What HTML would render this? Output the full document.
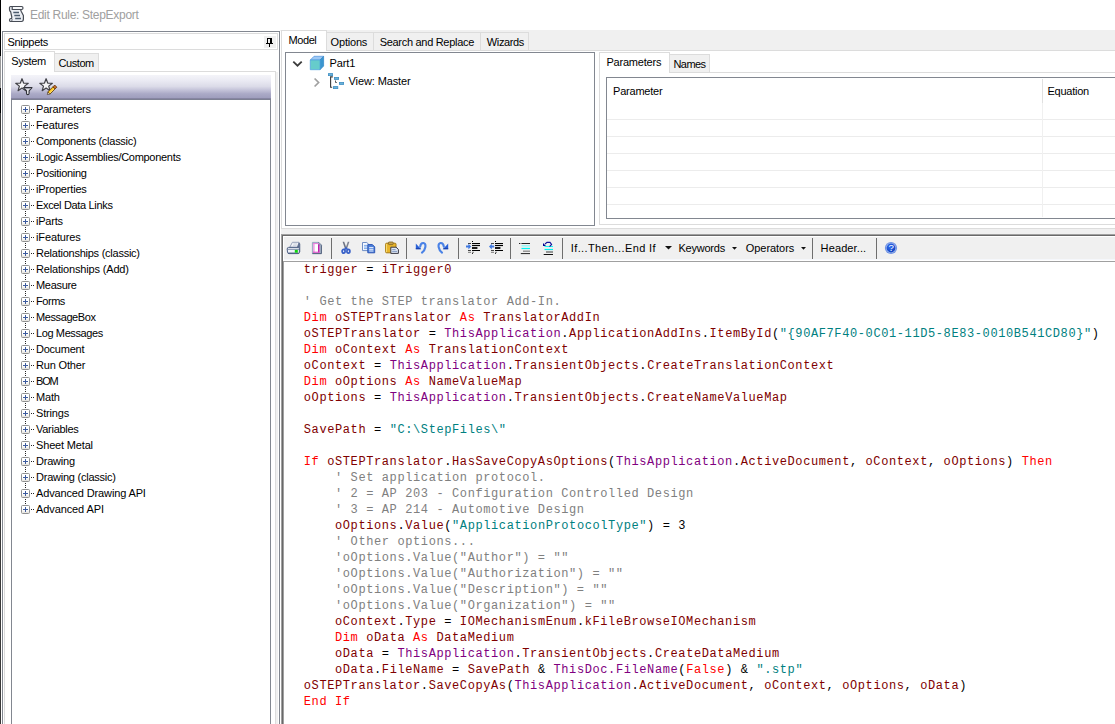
<!DOCTYPE html>
<html><head><meta charset="utf-8"><title>Edit Rule: StepExport</title>
<style>
html,body{margin:0;padding:0;background:#fff}
body{width:1115px;height:724px;overflow:hidden;position:relative;font-family:"Liberation Sans",sans-serif;font-size:11px;color:#000}
body>div,body>svg,body>pre{position:absolute;display:block}
.t{white-space:pre;line-height:16px;font-size:11px;color:#000}
.pm{width:9px;height:9px;box-sizing:border-box;border:1px solid #919191;border-radius:1.5px;background:linear-gradient(#fff 55%,#e4e2dc)}
.pm i{position:absolute;left:1px;top:3px;width:5px;height:1px;background:#3c5a9e}
.pm b{position:absolute;left:3px;top:1px;width:1px;height:5px;background:#3c5a9e}
.code{margin:0;font-family:"Liberation Mono",monospace;font-size:12px;letter-spacing:.6px;line-height:16px;color:#800000;white-space:pre}
.code .k{color:#ff0000}.code .c{color:#808080}.code .p{color:#800080}.code .s{color:#008080}.code .o{color:#000}
</style></head>
<body>
<div style="left:280px;top:30px;width:835px;height:206px;background:#f0f0f0"></div>
<div style="left:0px;top:0px;width:1px;height:724px;background:#3a3a3a"></div>
<div style="left:0px;top:0px;width:1px;height:56px;background:#000"></div>
<div style="left:0px;top:56px;width:1px;height:32px;background:#9a9a9a"></div>
<div style="left:0px;top:88px;width:1px;height:25px;background:#000"></div>
<svg style="left:8px;top:5px" width="17" height="18" viewBox="8 5 17 18">
<path d="M10.5 6.5 H21.6 Q23 6.6 23 8 Q23 9.4 21.6 9.5 H20.5 L21.3 11.5 L23.4 15.5 V19 Q23.4 21.4 21.5 21.5 H10.5 Q9.4 21.4 9.5 20 Q9.6 18.6 11 18.5 H11.6 L11.8 17 L10.6 11.6 Q9.5 11 9.5 9.4 V7.5 Q9.6 6.6 10.5 6.5 Z" fill="#eceff4" stroke="#474c55" stroke-width="1.2" stroke-linejoin="round"/>
<path d="M12.8 7.4 H21.8 V8.6 H12.8 Z" fill="#fff"/>
<path d="M12.2 6.6 V9.5 H20.6" fill="none" stroke="#474c55" stroke-width="1.2"/>
<path d="M11.6 18.5 Q12.6 19.4 11.6 21.4" fill="none" stroke="#4a4f58" stroke-width=".9"/>
<path d="M13.3 12.5H19M14.3 15.5H20M15.2 18.5H21" stroke="#4a5a6c" stroke-width="1.3"/>
</svg>
<div class="t" style="left:30px;top:7px;font-size:12px;line-height:16px;color:#a0a0a0;letter-spacing:-0.297px;">Edit Rule: StepExport</div>
<div style="left:2px;top:31px;width:278px;height:700px;border:1px solid #828790;background:#fff;box-sizing:border-box"></div>
<div style="left:4px;top:33px;width:274px;height:17px;border:1px solid #dcdcdc;box-sizing:border-box;background:#fff"></div>
<div class="t" style="left:7.4px;top:35px;line-height:14px;letter-spacing:-0.277px;">Snippets</div>
<div style="left:264px;top:36px;width:12px;height:12px;background:#f0f0f0"></div>
<svg style="left:266px;top:38px" width="7" height="9" viewBox="0 0 7 9" shape-rendering="crispEdges">
<rect x="1" y="0" width="5" height="1"/><rect x="1" y="0" width="1" height="5"/><rect x="4" y="0" width="2" height="5"/><rect x="0" y="5" width="7" height="1"/><rect x="3" y="6" width="1" height="3"/></svg>
<div style="left:4px;top:71px;width:272px;height:700px;border:1px solid #dcdcdc;box-sizing:border-box;background:#fff"></div>
<div style="left:276px;top:72px;width:2px;height:700px;background:#f0f0f0"></div>
<div style="left:54px;top:53px;width:45px;height:19px;border:1px solid #dcdcdc;box-sizing:border-box;background:#f0f0f0"></div>
<div style="left:4px;top:51px;width:51px;height:21px;border:1px solid #dcdcdc;border-bottom:none;box-sizing:border-box;background:#fff"></div>
<div class="t" style="left:11.3px;top:54px;line-height:14px;letter-spacing:-0.348px;">System</div>
<div class="t" style="left:58.4px;top:56px;line-height:14px;letter-spacing:-0.401px;">Custom</div>
<div style="left:11px;top:75px;width:260px;height:23px;background:linear-gradient(#f4f4f9 0%,#eaeaf3 25%,#dbdbe8 50%,#c6c5da 64%,#aaa9c6 82%,#9f9ebd 100%)"></div>
<div style="left:11px;top:98px;width:260px;height:1px;background:#8685a2"></div>
<svg style="left:12px;top:75px" width="50" height="24" viewBox="12 75 50 24">
<path d="M22.00 78.70 L23.62 83.08 L28.28 83.26 L24.62 86.15 L25.88 90.64 L22.00 88.05 L18.12 90.64 L19.38 86.15 L15.72 83.26 L20.38 83.08 Z" fill="#f4f4f6" stroke="#404046" stroke-width="1.2" stroke-linejoin="round"/>
<path d="M23.6 87.6 H32 L29.1 90.8 V93.2 Q29 94.6 27.8 94.6 Q26.6 94.6 26.5 93.2 V90.8 Z" fill="#e6e7ec" stroke="#2f3038" stroke-width="1.1" stroke-linejoin="round"/>
<path d="M24.6 88.6 H31" stroke="#9a9ca6" stroke-width=".9"/>
<path d="M46.10 78.70 L47.72 83.08 L52.38 83.26 L48.72 86.15 L49.98 90.64 L46.10 88.05 L42.22 90.64 L43.48 86.15 L39.82 83.26 L44.48 83.08 Z" fill="#f4f4f6" stroke="#404046" stroke-width="1.2" stroke-linejoin="round"/>
<path d="M47.3 94.6 L47.8 91.98 L49.92 94.1 Z" fill="#fff" stroke="#4a3a2a" stroke-width=".7" stroke-linejoin="round"/>
<path d="M47.8 91.98 L52.96 86.82 L55.08 88.94 L49.92 94.1 Z" fill="#ffc414" stroke="#55350a" stroke-width=".8" stroke-linejoin="round"/>
<path d="M49.3 93.4 L54.4 88.3" stroke="#fff1b0" stroke-width=".7"/>
<path d="M52.96 86.82 L54.72 85.06 L56.84 87.18 L55.08 88.94 Z" fill="#c9692a" stroke="#55350a" stroke-width=".8" stroke-linejoin="round"/>
</svg>
<div style="left:11px;top:99px;width:260px;height:700px;border:1px solid #828790;box-sizing:border-box;background:#fff"></div>
<div style="left:11px;top:99px;width:260px;height:1px;background:#7d8092"></div>
<div class="pm" style="left:21px;top:105px"><i></i><b></b></div>
<div style="left:31px;top:109px;width:1px;height:1px;background:#222"></div>
<div style="left:33px;top:109px;width:1px;height:1px;background:#222"></div>
<div style="left:25px;top:115px;width:1px;height:1px;background:#222"></div>
<div style="left:25px;top:117px;width:1px;height:1px;background:#222"></div>
<div style="left:25px;top:119px;width:1px;height:1px;background:#222"></div>
<div class="t" style="left:36.0px;top:101px;letter-spacing:-0.206px;">Parameters</div>
<div class="pm" style="left:21px;top:121px"><i></i><b></b></div>
<div style="left:31px;top:125px;width:1px;height:1px;background:#222"></div>
<div style="left:33px;top:125px;width:1px;height:1px;background:#222"></div>
<div style="left:25px;top:131px;width:1px;height:1px;background:#222"></div>
<div style="left:25px;top:133px;width:1px;height:1px;background:#222"></div>
<div style="left:25px;top:135px;width:1px;height:1px;background:#222"></div>
<div class="t" style="left:36.0px;top:117px;letter-spacing:-0.103px;">Features</div>
<div class="pm" style="left:21px;top:137px"><i></i><b></b></div>
<div style="left:31px;top:141px;width:1px;height:1px;background:#222"></div>
<div style="left:33px;top:141px;width:1px;height:1px;background:#222"></div>
<div style="left:25px;top:147px;width:1px;height:1px;background:#222"></div>
<div style="left:25px;top:149px;width:1px;height:1px;background:#222"></div>
<div style="left:25px;top:151px;width:1px;height:1px;background:#222"></div>
<div class="t" style="left:36.0px;top:133px;letter-spacing:-0.268px;">Components (classic)</div>
<div class="pm" style="left:21px;top:153px"><i></i><b></b></div>
<div style="left:31px;top:157px;width:1px;height:1px;background:#222"></div>
<div style="left:33px;top:157px;width:1px;height:1px;background:#222"></div>
<div style="left:25px;top:163px;width:1px;height:1px;background:#222"></div>
<div style="left:25px;top:165px;width:1px;height:1px;background:#222"></div>
<div style="left:25px;top:167px;width:1px;height:1px;background:#222"></div>
<div class="t" style="left:36.0px;top:149px;letter-spacing:-0.295px;">iLogic Assemblies/Components</div>
<div class="pm" style="left:21px;top:169px"><i></i><b></b></div>
<div style="left:31px;top:173px;width:1px;height:1px;background:#222"></div>
<div style="left:33px;top:173px;width:1px;height:1px;background:#222"></div>
<div style="left:25px;top:179px;width:1px;height:1px;background:#222"></div>
<div style="left:25px;top:181px;width:1px;height:1px;background:#222"></div>
<div style="left:25px;top:183px;width:1px;height:1px;background:#222"></div>
<div class="t" style="left:36.0px;top:165px;letter-spacing:-0.284px;">Positioning</div>
<div class="pm" style="left:21px;top:185px"><i></i><b></b></div>
<div style="left:31px;top:189px;width:1px;height:1px;background:#222"></div>
<div style="left:33px;top:189px;width:1px;height:1px;background:#222"></div>
<div style="left:25px;top:195px;width:1px;height:1px;background:#222"></div>
<div style="left:25px;top:197px;width:1px;height:1px;background:#222"></div>
<div style="left:25px;top:199px;width:1px;height:1px;background:#222"></div>
<div class="t" style="left:36.0px;top:181px;letter-spacing:-0.171px;">iProperties</div>
<div class="pm" style="left:21px;top:201px"><i></i><b></b></div>
<div style="left:31px;top:205px;width:1px;height:1px;background:#222"></div>
<div style="left:33px;top:205px;width:1px;height:1px;background:#222"></div>
<div style="left:25px;top:211px;width:1px;height:1px;background:#222"></div>
<div style="left:25px;top:213px;width:1px;height:1px;background:#222"></div>
<div style="left:25px;top:215px;width:1px;height:1px;background:#222"></div>
<div class="t" style="left:36.0px;top:197px;letter-spacing:-0.334px;">Excel Data Links</div>
<div class="pm" style="left:21px;top:217px"><i></i><b></b></div>
<div style="left:31px;top:221px;width:1px;height:1px;background:#222"></div>
<div style="left:33px;top:221px;width:1px;height:1px;background:#222"></div>
<div style="left:25px;top:227px;width:1px;height:1px;background:#222"></div>
<div style="left:25px;top:229px;width:1px;height:1px;background:#222"></div>
<div style="left:25px;top:231px;width:1px;height:1px;background:#222"></div>
<div class="t" style="left:36.0px;top:213px;letter-spacing:-0.204px;">iParts</div>
<div class="pm" style="left:21px;top:233px"><i></i><b></b></div>
<div style="left:31px;top:237px;width:1px;height:1px;background:#222"></div>
<div style="left:33px;top:237px;width:1px;height:1px;background:#222"></div>
<div style="left:25px;top:243px;width:1px;height:1px;background:#222"></div>
<div style="left:25px;top:245px;width:1px;height:1px;background:#222"></div>
<div style="left:25px;top:247px;width:1px;height:1px;background:#222"></div>
<div class="t" style="left:36.0px;top:229px;letter-spacing:-0.129px;">iFeatures</div>
<div class="pm" style="left:21px;top:249px"><i></i><b></b></div>
<div style="left:31px;top:253px;width:1px;height:1px;background:#222"></div>
<div style="left:33px;top:253px;width:1px;height:1px;background:#222"></div>
<div style="left:25px;top:259px;width:1px;height:1px;background:#222"></div>
<div style="left:25px;top:261px;width:1px;height:1px;background:#222"></div>
<div style="left:25px;top:263px;width:1px;height:1px;background:#222"></div>
<div class="t" style="left:36.0px;top:245px;letter-spacing:-0.245px;">Relationships (classic)</div>
<div class="pm" style="left:21px;top:265px"><i></i><b></b></div>
<div style="left:31px;top:269px;width:1px;height:1px;background:#222"></div>
<div style="left:33px;top:269px;width:1px;height:1px;background:#222"></div>
<div style="left:25px;top:275px;width:1px;height:1px;background:#222"></div>
<div style="left:25px;top:277px;width:1px;height:1px;background:#222"></div>
<div style="left:25px;top:279px;width:1px;height:1px;background:#222"></div>
<div class="t" style="left:36.0px;top:261px;letter-spacing:-0.168px;">Relationships (Add)</div>
<div class="pm" style="left:21px;top:281px"><i></i><b></b></div>
<div style="left:31px;top:285px;width:1px;height:1px;background:#222"></div>
<div style="left:33px;top:285px;width:1px;height:1px;background:#222"></div>
<div style="left:25px;top:291px;width:1px;height:1px;background:#222"></div>
<div style="left:25px;top:293px;width:1px;height:1px;background:#222"></div>
<div style="left:25px;top:295px;width:1px;height:1px;background:#222"></div>
<div class="t" style="left:36.0px;top:277px;letter-spacing:-0.314px;">Measure</div>
<div class="pm" style="left:21px;top:297px"><i></i><b></b></div>
<div style="left:31px;top:301px;width:1px;height:1px;background:#222"></div>
<div style="left:33px;top:301px;width:1px;height:1px;background:#222"></div>
<div style="left:25px;top:307px;width:1px;height:1px;background:#222"></div>
<div style="left:25px;top:309px;width:1px;height:1px;background:#222"></div>
<div style="left:25px;top:311px;width:1px;height:1px;background:#222"></div>
<div class="t" style="left:36.0px;top:293px;letter-spacing:-0.454px;">Forms</div>
<div class="pm" style="left:21px;top:313px"><i></i><b></b></div>
<div style="left:31px;top:317px;width:1px;height:1px;background:#222"></div>
<div style="left:33px;top:317px;width:1px;height:1px;background:#222"></div>
<div style="left:25px;top:323px;width:1px;height:1px;background:#222"></div>
<div style="left:25px;top:325px;width:1px;height:1px;background:#222"></div>
<div style="left:25px;top:327px;width:1px;height:1px;background:#222"></div>
<div class="t" style="left:36.0px;top:309px;letter-spacing:-0.399px;">MessageBox</div>
<div class="pm" style="left:21px;top:329px"><i></i><b></b></div>
<div style="left:31px;top:333px;width:1px;height:1px;background:#222"></div>
<div style="left:33px;top:333px;width:1px;height:1px;background:#222"></div>
<div style="left:25px;top:339px;width:1px;height:1px;background:#222"></div>
<div style="left:25px;top:341px;width:1px;height:1px;background:#222"></div>
<div style="left:25px;top:343px;width:1px;height:1px;background:#222"></div>
<div class="t" style="left:36.0px;top:325px;letter-spacing:-0.387px;">Log Messages</div>
<div class="pm" style="left:21px;top:345px"><i></i><b></b></div>
<div style="left:31px;top:349px;width:1px;height:1px;background:#222"></div>
<div style="left:33px;top:349px;width:1px;height:1px;background:#222"></div>
<div style="left:25px;top:355px;width:1px;height:1px;background:#222"></div>
<div style="left:25px;top:357px;width:1px;height:1px;background:#222"></div>
<div style="left:25px;top:359px;width:1px;height:1px;background:#222"></div>
<div class="t" style="left:36.0px;top:341px;letter-spacing:-0.243px;">Document</div>
<div class="pm" style="left:21px;top:361px"><i></i><b></b></div>
<div style="left:31px;top:365px;width:1px;height:1px;background:#222"></div>
<div style="left:33px;top:365px;width:1px;height:1px;background:#222"></div>
<div style="left:25px;top:371px;width:1px;height:1px;background:#222"></div>
<div style="left:25px;top:373px;width:1px;height:1px;background:#222"></div>
<div style="left:25px;top:375px;width:1px;height:1px;background:#222"></div>
<div class="t" style="left:36.0px;top:357px;letter-spacing:-0.172px;">Run Other</div>
<div class="pm" style="left:21px;top:377px"><i></i><b></b></div>
<div style="left:31px;top:381px;width:1px;height:1px;background:#222"></div>
<div style="left:33px;top:381px;width:1px;height:1px;background:#222"></div>
<div style="left:25px;top:387px;width:1px;height:1px;background:#222"></div>
<div style="left:25px;top:389px;width:1px;height:1px;background:#222"></div>
<div style="left:25px;top:391px;width:1px;height:1px;background:#222"></div>
<div class="t" style="left:36.0px;top:373px;letter-spacing:-1.154px;">BOM</div>
<div class="pm" style="left:21px;top:393px"><i></i><b></b></div>
<div style="left:31px;top:397px;width:1px;height:1px;background:#222"></div>
<div style="left:33px;top:397px;width:1px;height:1px;background:#222"></div>
<div style="left:25px;top:403px;width:1px;height:1px;background:#222"></div>
<div style="left:25px;top:405px;width:1px;height:1px;background:#222"></div>
<div style="left:25px;top:407px;width:1px;height:1px;background:#222"></div>
<div class="t" style="left:36.0px;top:389px;letter-spacing:-0.167px;">Math</div>
<div class="pm" style="left:21px;top:409px"><i></i><b></b></div>
<div style="left:31px;top:413px;width:1px;height:1px;background:#222"></div>
<div style="left:33px;top:413px;width:1px;height:1px;background:#222"></div>
<div style="left:25px;top:419px;width:1px;height:1px;background:#222"></div>
<div style="left:25px;top:421px;width:1px;height:1px;background:#222"></div>
<div style="left:25px;top:423px;width:1px;height:1px;background:#222"></div>
<div class="t" style="left:36.0px;top:405px;letter-spacing:-0.164px;">Strings</div>
<div class="pm" style="left:21px;top:425px"><i></i><b></b></div>
<div style="left:31px;top:429px;width:1px;height:1px;background:#222"></div>
<div style="left:33px;top:429px;width:1px;height:1px;background:#222"></div>
<div style="left:25px;top:435px;width:1px;height:1px;background:#222"></div>
<div style="left:25px;top:437px;width:1px;height:1px;background:#222"></div>
<div style="left:25px;top:439px;width:1px;height:1px;background:#222"></div>
<div class="t" style="left:36.0px;top:421px;letter-spacing:-0.272px;">Variables</div>
<div class="pm" style="left:21px;top:441px"><i></i><b></b></div>
<div style="left:31px;top:445px;width:1px;height:1px;background:#222"></div>
<div style="left:33px;top:445px;width:1px;height:1px;background:#222"></div>
<div style="left:25px;top:451px;width:1px;height:1px;background:#222"></div>
<div style="left:25px;top:453px;width:1px;height:1px;background:#222"></div>
<div style="left:25px;top:455px;width:1px;height:1px;background:#222"></div>
<div class="t" style="left:36.0px;top:437px;letter-spacing:-0.164px;">Sheet Metal</div>
<div class="pm" style="left:21px;top:457px"><i></i><b></b></div>
<div style="left:31px;top:461px;width:1px;height:1px;background:#222"></div>
<div style="left:33px;top:461px;width:1px;height:1px;background:#222"></div>
<div style="left:25px;top:467px;width:1px;height:1px;background:#222"></div>
<div style="left:25px;top:469px;width:1px;height:1px;background:#222"></div>
<div style="left:25px;top:471px;width:1px;height:1px;background:#222"></div>
<div class="t" style="left:36.0px;top:453px;letter-spacing:-0.208px;">Drawing</div>
<div class="pm" style="left:21px;top:473px"><i></i><b></b></div>
<div style="left:31px;top:477px;width:1px;height:1px;background:#222"></div>
<div style="left:33px;top:477px;width:1px;height:1px;background:#222"></div>
<div style="left:25px;top:483px;width:1px;height:1px;background:#222"></div>
<div style="left:25px;top:485px;width:1px;height:1px;background:#222"></div>
<div style="left:25px;top:487px;width:1px;height:1px;background:#222"></div>
<div class="t" style="left:36.0px;top:469px;letter-spacing:-0.238px;">Drawing (classic)</div>
<div class="pm" style="left:21px;top:489px"><i></i><b></b></div>
<div style="left:31px;top:493px;width:1px;height:1px;background:#222"></div>
<div style="left:33px;top:493px;width:1px;height:1px;background:#222"></div>
<div style="left:25px;top:499px;width:1px;height:1px;background:#222"></div>
<div style="left:25px;top:501px;width:1px;height:1px;background:#222"></div>
<div style="left:25px;top:503px;width:1px;height:1px;background:#222"></div>
<div class="t" style="left:36.0px;top:485px;letter-spacing:-0.136px;">Advanced Drawing API</div>
<div class="pm" style="left:21px;top:505px"><i></i><b></b></div>
<div style="left:31px;top:509px;width:1px;height:1px;background:#222"></div>
<div style="left:33px;top:509px;width:1px;height:1px;background:#222"></div>
<div class="t" style="left:36.0px;top:501px;letter-spacing:-0.101px;">Advanced API</div>
<div style="left:281px;top:50px;width:840px;height:179px;border:1px solid #dcdcdc;box-sizing:border-box;background:#fff"></div>
<div style="left:280px;top:31px;width:1px;height:700px;background:#fff"></div>
<div style="left:326px;top:32px;width:48px;height:19px;border:1px solid #dcdcdc;box-sizing:border-box;background:#f0f0f0"></div>
<div class="t" style="left:330.6px;top:35px;line-height:14px;letter-spacing:-0.189px;">Options</div>
<div style="left:373px;top:32px;width:108px;height:19px;border:1px solid #dcdcdc;box-sizing:border-box;background:#f0f0f0"></div>
<div class="t" style="left:379.7px;top:35px;line-height:14px;letter-spacing:-0.299px;">Search and Replace</div>
<div style="left:480px;top:32px;width:49px;height:19px;border:1px solid #dcdcdc;box-sizing:border-box;background:#f0f0f0"></div>
<div class="t" style="left:486.8px;top:35px;line-height:14px;letter-spacing:-0.362px;">Wizards</div>
<div style="left:281px;top:30px;width:46px;height:21px;border:1px solid #dcdcdc;border-bottom:none;box-sizing:border-box;background:#fff"></div>
<div class="t" style="left:288.6px;top:33px;line-height:14px;letter-spacing:-0.434px;">Model</div>
<div style="left:285px;top:52px;width:310px;height:174px;border:1px solid #828790;box-sizing:border-box;background:#fff"></div>
<svg style="left:292px;top:60px" width="11" height="8" viewBox="0 0 11 8"><path d="M1.3 1.6 L5.5 5.7 L9.7 1.6" fill="none" stroke="#3c3c3c" stroke-width="1.8"/></svg>
<svg style="left:309px;top:55px" width="16" height="16" viewBox="0 0 16 16">
<path d="M1.3 5 L5 1.3 H14.6 L11 5 Z" fill="#9fc9f5" stroke="#5a9be0" stroke-width=".8" stroke-linejoin="round"/>
<path d="M11 5 L14.6 1.3 V11 L11 14.7 Z" fill="#3a96cf" stroke="#3a8cc8" stroke-width=".8" stroke-linejoin="round"/>
<path d="M1.3 5 H11 V14.7 H1.3 Z" fill="#66cccb" stroke="#52a6df" stroke-width=".8" stroke-linejoin="round"/></svg>
<div class="t" style="left:329.5px;top:55px;line-height:16px;letter-spacing:-0.119px;">Part1</div>
<svg style="left:313px;top:77px" width="8" height="11" viewBox="0 0 8 11"><path d="M1.6 1.5 L5.6 5.5 L1.6 9.5" fill="none" stroke="#a0a0a0" stroke-width="1.7"/></svg>
<svg style="left:327px;top:72px" width="18" height="18" viewBox="0 0 18 18">
<path d="M5.8 4.9 H3.6 V15.3 H5.2" fill="none" stroke="#3a3a3a" stroke-width="1.1" stroke-linejoin="miter"/>
<path d="M8.5 8.5 V10.5 H9.8" fill="none" stroke="#444" stroke-width=".9"/>
<g fill="#6cb2d8" stroke="#3f8fc4" stroke-width=".8">
<rect x="1.4" y="1.6" width="4.2" height="2"/><rect x="7.4" y="5.4" width="4.2" height="2"/><rect x="12.4" y="10.4" width="4.2" height="2"/><rect x="6.4" y="14.6" width="4.4" height="2"/></g></svg>
<div class="t" style="left:348.6px;top:73px;line-height:16px;letter-spacing:-0.115px;">View: Master</div>
<div style="left:599px;top:72px;width:520px;height:153px;border:1px solid #dcdcdc;box-sizing:border-box;background:#fff"></div>
<div style="left:669px;top:54px;width:41px;height:19px;border:1px solid #dcdcdc;box-sizing:border-box;background:#f0f0f0"></div>
<div style="left:599px;top:52px;width:71px;height:21px;border:1px solid #dcdcdc;border-bottom:none;box-sizing:border-box;background:#fff"></div>
<div class="t" style="left:606.5px;top:55px;line-height:14px;letter-spacing:-0.216px;">Parameters</div>
<div class="t" style="left:673.5px;top:57px;line-height:14px;letter-spacing:-0.569px;">Names</div>
<div style="left:606px;top:77px;width:520px;height:142px;border:1px solid #828790;box-sizing:border-box;background:#fff"></div>
<div style="left:607px;top:119px;width:510px;height:1px;background:#ececec"></div>
<div style="left:607px;top:136px;width:510px;height:1px;background:#ececec"></div>
<div style="left:607px;top:153px;width:510px;height:1px;background:#ececec"></div>
<div style="left:607px;top:170px;width:510px;height:1px;background:#ececec"></div>
<div style="left:607px;top:187px;width:510px;height:1px;background:#ececec"></div>
<div style="left:607px;top:204px;width:510px;height:1px;background:#ececec"></div>
<div style="left:1042px;top:79px;width:1px;height:24px;background:#e0e0e0"></div>
<div style="left:1042px;top:103px;width:1px;height:114px;background:#f0f0f0"></div>
<div class="t" style="left:613px;top:84px;line-height:14px;letter-spacing:-0.207px;">Parameter</div>
<div class="t" style="left:1047.4px;top:84px;line-height:14px;letter-spacing:-0.230px;">Equation</div>
<div style="left:281px;top:234px;width:840px;height:500px;background:#fff"></div>
<div style="left:281px;top:234px;width:840px;height:1px;background:#a0a0a0"></div>
<div style="left:281px;top:235px;width:840px;height:1px;background:#696969"></div>
<div style="left:281px;top:234px;width:1px;height:500px;background:#a0a0a0"></div>
<div style="left:282px;top:235px;width:1px;height:500px;background:#696969"></div>
<div style="left:284px;top:237px;width:840px;height:22px;background:#f0f0f0"></div>
<div style="left:284px;top:259px;width:840px;height:1px;background:#f5f7fb"></div>
<div style="left:283px;top:261px;width:840px;height:1px;background:#a0a0a0"></div>
<div style="left:283px;top:261px;width:1px;height:500px;background:#a0a0a0"></div>
<div style="left:331px;top:238px;width:1px;height:21px;background:#6e6e6e"></div>
<div style="left:406px;top:238px;width:1px;height:21px;background:#6e6e6e"></div>
<div style="left:458px;top:238px;width:1px;height:21px;background:#6e6e6e"></div>
<div style="left:510px;top:238px;width:1px;height:21px;background:#6e6e6e"></div>
<div style="left:562px;top:238px;width:1px;height:21px;background:#6e6e6e"></div>
<div style="left:812px;top:238px;width:1px;height:21px;background:#6e6e6e"></div>
<div style="left:876px;top:238px;width:1px;height:21px;background:#6e6e6e"></div>
<div class="t" style="left:570.8px;top:241px;line-height:14px;letter-spacing:0.385px;">If...Then...End If</div>
<div class="t" style="left:678.4px;top:241px;line-height:14px;letter-spacing:-0.212px;">Keywords</div>
<div class="t" style="left:745.8px;top:241px;line-height:14px;letter-spacing:-0.058px;">Operators</div>
<div class="t" style="left:820.6px;top:241px;line-height:14px;letter-spacing:0.118px;">Header...</div>
<svg style="left:665px;top:246px" width="7" height="4" viewBox="0 0 7 4"><path d="M0 0H7L3.5 3.6Z" fill="#111"/></svg>
<svg style="left:732px;top:247px" width="5" height="3" viewBox="0 0 5 3"><path d="M0 0H5L2.5 2.8Z" fill="#111"/></svg>
<svg style="left:801px;top:247px" width="5" height="3" viewBox="0 0 5 3"><path d="M0 0H5L2.5 2.8Z" fill="#111"/></svg>
<svg style="left:286px;top:241px" width="16" height="14" viewBox="0 0 16 14">
<path d="M6.4 1.3 H13 L11.4 6.2 H3.8 Z" fill="#f6f7fa" stroke="#8d99b2" stroke-width=".9" stroke-linejoin="round"/>
<path d="M7.4 2.9H11.2M6.9 4.3H10.7" stroke="#c2c9d8" stroke-width=".8"/>
<path d="M11.6 6.2 L13.2 1.8 L13.9 3 V11 L12.6 12.4 Z" fill="#5f7194" stroke="#4c5d80" stroke-width=".6" stroke-linejoin="round"/>
<path d="M2.6 6.4 H12.4 Q13.4 6.4 13.4 7.6 V11.4 Q13.4 12.6 12.2 12.6 H3 Q1.6 12.6 1.5 11.2 L1.2 8 Q1.2 6.4 2.6 6.4 Z" fill="#eef1f8" stroke="#4f6184" stroke-width="1"/>
<path d="M1.6 8.3H13" stroke="#6e7f9f" stroke-width=".9"/>
<path d="M2.2 12 H12.6" stroke="#40507a" stroke-width=".8"/>
<rect x="8.8" y="8.9" width="3" height="2.8" fill="#10d410"/>
</svg>
<svg style="left:311px;top:241px" width="12" height="14" viewBox="0 0 12 14">
<path d="M1.4 1.4 H7.6 L10.4 4.2 V12.6 H1.4 Z" fill="#fff" stroke="#93a4bd" stroke-width="1" stroke-linejoin="round"/>
<path d="M7.6 1.4 L10.4 4.2 V12.6 H1.4" fill="none" stroke="#55647e" stroke-width="1" stroke-linejoin="round"/>
<path d="M7.6 1.4 V4.2 H10.4" fill="#aab6c9" stroke="#6b7d99" stroke-width=".7"/>
<rect x="8.5" y="4.4" width="1.4" height="7.6" fill="#93a1b9"/>
<rect x="2" y="2.2" width="1.7" height="9.4" fill="#f0a4e6"/>
<rect x="7" y="3.4" width="1.5" height="8.2" fill="#c21aac"/>
<rect x="2" y="2" width="5.6" height="1.1" fill="#e784dc"/>
<rect x="2" y="10.7" width="6.5" height="1.1" fill="#d64cc4"/>
</svg>
<svg style="left:340px;top:241px" width="12" height="14" viewBox="0 0 12 14">
<path d="M2.6 .8 L4.2 .8 L6.6 7.6 L5.2 8.6 Z" fill="#6d7383"/>
<path d="M9.4 .8 L7.8 .8 L5.4 7.6 L6.8 8.6 Z" fill="#7d8392"/>
<ellipse cx="3.6" cy="10.3" rx="1.5" ry="1.9" fill="#dfe6f8" stroke="#3760c8" stroke-width="1.7"/>
<ellipse cx="8.4" cy="10.3" rx="1.5" ry="1.9" fill="#dfe6f8" stroke="#3760c8" stroke-width="1.7"/>
<path d="M4.4 8.8 L6 7 L7.6 8.8" stroke="#3760c8" stroke-width="1.6" fill="none"/>
</svg>
<svg style="left:361px;top:241px" width="15" height="13" viewBox="0 0 15 13">
<path d="M1.5 1.5 H5.8 L8 3.7 V9.6 H1.5 Z" fill="#f4f8ff" stroke="#6f8fc6" stroke-width="1" stroke-linejoin="round"/>
<path d="M3 4.4H6.4M3 6H6.4M3 7.6H6.4" stroke="#6fa3e6" stroke-width=".9"/>
<path d="M6.8 3.6 H11.4 L13.7 5.9 V11.8 H6.8 Z" fill="#4d80dc" stroke="#2c55b4" stroke-width="1" stroke-linejoin="round"/>
<path d="M8.2 6.6H12.4M8.2 8.3H12.4M8.2 10H12.4" stroke="#fff" stroke-width=".9"/>
</svg>
<svg style="left:384px;top:241px" width="16" height="14" viewBox="0 0 16 14">
<rect x="1.6" y="2.2" width="10.4" height="9.6" rx="1" fill="#e9b52a" stroke="#a57811" stroke-width="1"/>
<path d="M2.4 3 V11" stroke="#f8de7c" stroke-width="1"/>
<rect x="4.4" y="1" width="4.8" height="2.6" rx=".8" fill="#c9a24a" stroke="#7e6424" stroke-width=".8"/>
<path d="M6.8 6.2 H12 L14.4 8.4 V12.4 H6.8 Z" fill="#dfe8f6" stroke="#3b3b46" stroke-width="1" stroke-linejoin="round"/>
<path d="M8.2 8.6H11.6M8.2 10.4H13" stroke="#7a92bd" stroke-width=".9"/>
</svg>
<svg style="left:415px;top:241px" width="12" height="13" viewBox="0 0 12 13"><path d="M5.2 5.6 Q5.6 1.8 8.4 2 Q11 2.5 10.3 6.2 Q9.7 9.6 7 11.6" fill="none" stroke="#4a82e6" stroke-width="2.1" stroke-linecap="round"/><path d="M.8 2.6 V8.2 H6.2 Z" fill="#2860d8"/><path d="M.8 7.2 H5.6 V8.2 H.8Z" fill="#1a3fa8"/></svg>
<svg style="left:437px;top:241px" width="12" height="13" viewBox="0 0 12 13"><g transform="translate(12,0) scale(-1,1)"><path d="M5.2 5.6 Q5.6 1.8 8.4 2 Q11 2.5 10.3 6.2 Q9.7 9.6 7 11.6" fill="none" stroke="#4a82e6" stroke-width="2.1" stroke-linecap="round"/><path d="M.8 2.6 V8.2 H6.2 Z" fill="#2860d8"/><path d="M.8 7.2 H5.6 V8.2 H.8Z" fill="#1a3fa8"/></g></svg>
<svg style="left:465px;top:240px" width="16" height="15" viewBox="0 0 16 15">
<rect x="7" y="1" width="1" height="1" fill="#000"/><rect x="7" y="13" width="1" height="1" fill="#333"/>
<path d="M3 3.5H6" stroke="#444" stroke-width="1"/><path d="M7 3.5H15" stroke="#000" stroke-width="1"/>
<path d="M7 5.5H15" stroke="#000" stroke-width="1.2"/>
<path d="M7 8H12.4" stroke="#000" stroke-width="1.8"/>
<path d="M3 10.5H6" stroke="#444" stroke-width="1"/><path d="M7 10.5H15" stroke="#000" stroke-width="1"/>
<path d="M3 12.3H6M7 12.3H9" stroke="#777" stroke-width="1"/>
<path d="M1 5.6 H3.4 V3.8 L6.2 6.6 L3.4 9.4 V7.6 H1 Z" fill="#3f78e0"/>
</svg>
<svg style="left:488px;top:240px" width="16" height="15" viewBox="0 0 16 15">
<rect x="7" y="1" width="1" height="1" fill="#000"/><rect x="7" y="13" width="1" height="1" fill="#333"/>
<path d="M3 3.5H6" stroke="#444" stroke-width="1"/><path d="M7 3.5H15" stroke="#000" stroke-width="1"/>
<path d="M7 5.5H15" stroke="#000" stroke-width="1.2"/>
<path d="M7 8H12.4" stroke="#000" stroke-width="1.8"/>
<path d="M3 10.5H6" stroke="#444" stroke-width="1"/><path d="M7 10.5H15" stroke="#000" stroke-width="1"/>
<path d="M3 12.3H6M7 12.3H9" stroke="#777" stroke-width="1"/>
<path d="M6.2 5.6 H3.8 V3.8 L1 6.6 L3.8 9.4 V7.6 H6.2 Z" fill="#3f78e0"/>
</svg>
<svg style="left:518px;top:242px" width="13" height="13" viewBox="0 0 13 13">
<path d="M1 1.5H2.4M3.4 1.5H12" stroke="#222" stroke-width="1"/>
<path d="M3.5 3.8H12" stroke="#7ffafa" stroke-width="1.2"/>
<path d="M3.5 6.5H12" stroke="#00f6f6" stroke-width="1.2"/>
<path d="M5 9.2H12" stroke="#8a8a8a" stroke-width="1.3"/>
<path d="M2.8 11.6H12" stroke="#222" stroke-width="1"/>
</svg>
<svg style="left:542px;top:241px" width="13" height="15" viewBox="0 0 13 15">
<path d="M2.5 5.5H11" stroke="#22f2f2" stroke-width="1.1"/>
<path d="M2.5 8.5H11" stroke="#00f0f0" stroke-width="1.2"/>
<path d="M4 11H11" stroke="#8c8c8c" stroke-width="1.8"/>
<path d="M1.7 13.5H11" stroke="#111" stroke-width="1"/>
<path d="M3 3 L5 1.4 H8 L9.6 3.4 L7.6 5.6" fill="none" stroke="#10109a" stroke-width="1.1"/>
<path d="M1 2 V5 H4 Z" fill="#000090"/>
</svg>
<svg style="left:884px;top:241px" width="14" height="14" viewBox="0 0 14 14">
<defs><radialGradient id="hg" cx=".4" cy=".35" r=".75"><stop offset="0" stop-color="#2f6cf0"/><stop offset=".7" stop-color="#174ccc"/><stop offset="1" stop-color="#0b3aa8"/></radialGradient></defs>
<circle cx="7" cy="7" r="6.1" fill="#7093e4"/>
<circle cx="7" cy="7" r="4.9" fill="#a9bff2"/>
<circle cx="7" cy="7" r="4.4" fill="url(#hg)"/>
<text x="7.2" y="10.2" text-anchor="middle" font-family="Liberation Sans, sans-serif" font-size="9.6" fill="#fff">?</text>
</svg>

<pre class="code" style="left:303.8px;top:262px">trigger <span class="o">=</span> iTrigger0

<span class="c">' Get the STEP translator Add-In.</span>
<span class="k">Dim</span> oSTEPTranslator <span class="k">As</span> TranslatorAddIn
oSTEPTranslator <span class="o">=</span> <span class="p">ThisApplication</span><span class="o">.</span>ApplicationAddIns<span class="o">.</span>ItemById<span class="o">(</span><span class="s">"{90AF7F40-0C01-11D5-8E83-0010B541CD80}"</span><span class="o">)</span>
<span class="k">Dim</span> oContext <span class="k">As</span> TranslationContext
oContext <span class="o">=</span> <span class="p">ThisApplication</span><span class="o">.</span>TransientObjects<span class="o">.</span>CreateTranslationContext
<span class="k">Dim</span> oOptions <span class="k">As</span> NameValueMap
oOptions <span class="o">=</span> <span class="p">ThisApplication</span><span class="o">.</span>TransientObjects<span class="o">.</span>CreateNameValueMap

SavePath <span class="o">=</span> <span class="s">"C:\StepFiles\"</span>

<span class="k">If</span> oSTEPTranslator<span class="o">.</span>HasSaveCopyAsOptions<span class="o">(</span><span class="p">ThisApplication</span><span class="o">.</span>ActiveDocument<span class="o">,</span> oContext<span class="o">,</span> oOptions<span class="o">)</span> <span class="k">Then</span>
    <span class="c">' Set application protocol.</span>
    <span class="c">' 2 = AP 203 - Configuration Controlled Design</span>
    <span class="c">' 3 = AP 214 - Automotive Design</span>
    oOptions<span class="o">.</span>Value<span class="o">(</span><span class="s">"ApplicationProtocolType"</span><span class="o">)</span> <span class="o">=</span> <span class="o">3</span>
    <span class="c">' Other options...</span>
    <span class="c">'oOptions.Value("Author") = ""</span>
    <span class="c">'oOptions.Value("Authorization") = ""</span>
    <span class="c">'oOptions.Value("Description") = ""</span>
    <span class="c">'oOptions.Value("Organization") = ""</span>
    oContext<span class="o">.</span>Type <span class="o">=</span> IOMechanismEnum<span class="o">.</span>kFileBrowseIOMechanism
    <span class="k">Dim</span> oData <span class="k">As</span> DataMedium
    oData <span class="o">=</span> <span class="p">ThisApplication</span><span class="o">.</span>TransientObjects<span class="o">.</span>CreateDataMedium
    oData<span class="o">.</span>FileName <span class="o">=</span> SavePath <span class="o">&amp;</span> <span class="p">ThisDoc.FileName</span><span class="o">(</span><span class="k">False</span><span class="o">)</span> <span class="o">&amp;</span> <span class="s">".stp"</span>
oSTEPTranslator<span class="o">.</span>SaveCopyAs<span class="o">(</span><span class="p">ThisApplication</span><span class="o">.</span>ActiveDocument<span class="o">,</span> oContext<span class="o">,</span> oOptions<span class="o">,</span> oData<span class="o">)</span>
<span class="k">End</span> <span class="k">If</span></pre>
</body></html>
